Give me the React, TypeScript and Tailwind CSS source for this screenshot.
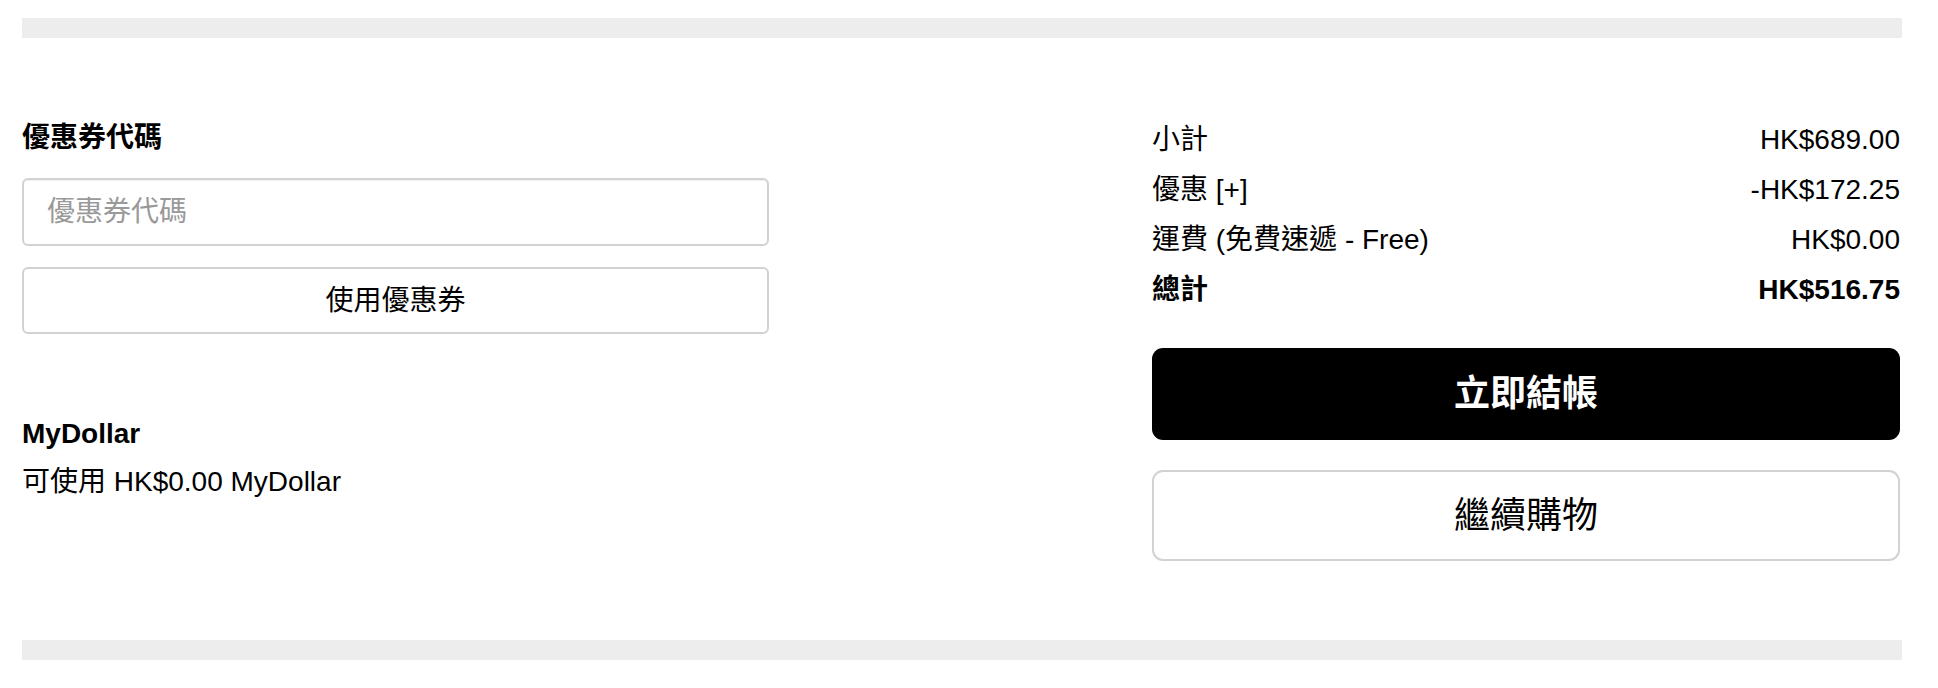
import { useState } from "react";

const font = { fontFamily: '"Liberation Sans", "Noto Sans CJK TC", sans-serif' };

interface SummaryRowProps {
  label: string;
  value: string;
  bold?: boolean;
}

function SummaryRow({ label, value, bold }: SummaryRowProps) {
  return (
    <div
      className={`flex h-[50px] items-center justify-between leading-[50px] text-[28px] text-black ${
        bold ? "font-bold" : ""
      }`}
    >
      <span>{label}</span>
      <span>{value}</span>
    </div>
  );
}

export default function App() {
  const [coupon, setCoupon] = useState("");

  return (
    <div className="min-h-screen bg-white" style={font}>
      <div className="ml-[22px] w-[1880px]">
        <div className="mt-[18px] h-[20px] bg-[#ededed]" />

        <div className="flex justify-between pt-[77px]">
          {/* Coupon + MyDollar */}
          <div className="w-[747px]">
            <h3 className="h-[46px] text-[28px] font-bold leading-[46px] text-black">
              優惠券代碼
            </h3>
            <input
              value={coupon}
              onChange={(e) => setCoupon(e.target.value)}
              placeholder="優惠券代碼"
              className="mt-[17px] block h-[68px] w-full rounded-[6px] border-2 border-[#d2d2d2] bg-white px-[23px] text-[28px] text-black shadow-[inset_0_1px_1px_rgba(0,0,0,0.06)] outline-none placeholder:text-[#999999]"
            />
            <button className="mt-[21px] block h-[67px] w-full rounded-[6px] border-2 border-[#d2d2d2] bg-white text-[28px] text-black">
              使用優惠券
            </button>

            <div className="mt-[76px] text-[28px] font-bold leading-[48px] text-black">
              MyDollar
            </div>
            <div className="text-[28px] leading-[48px] text-black">
              可使用 HK$0.00 MyDollar
            </div>
          </div>

          {/* Order summary */}
          <div className="mr-[2px] w-[748px]">
            <SummaryRow label="小計" value="HK$689.00" />
            <SummaryRow label="優惠 [+]" value="-HK$172.25" />
            <SummaryRow label="運費 (免費速遞 - Free)" value="HK$0.00" />
            <SummaryRow label="總計" value="HK$516.75" bold />

            <button className="mt-[33px] flex h-[92px] w-full items-center justify-center rounded-[11px] bg-black text-[36px] font-bold text-white">
              立即結帳
            </button>
            <button className="mt-[30px] flex h-[91px] w-full items-center justify-center rounded-[11px] border-2 border-[#d2d2d2] bg-white text-[36px] text-black">
              繼續購物
            </button>
          </div>
        </div>

        <div className="mt-[79px] h-[20px] bg-[#ededed]" />
      </div>
    </div>
  );
}
